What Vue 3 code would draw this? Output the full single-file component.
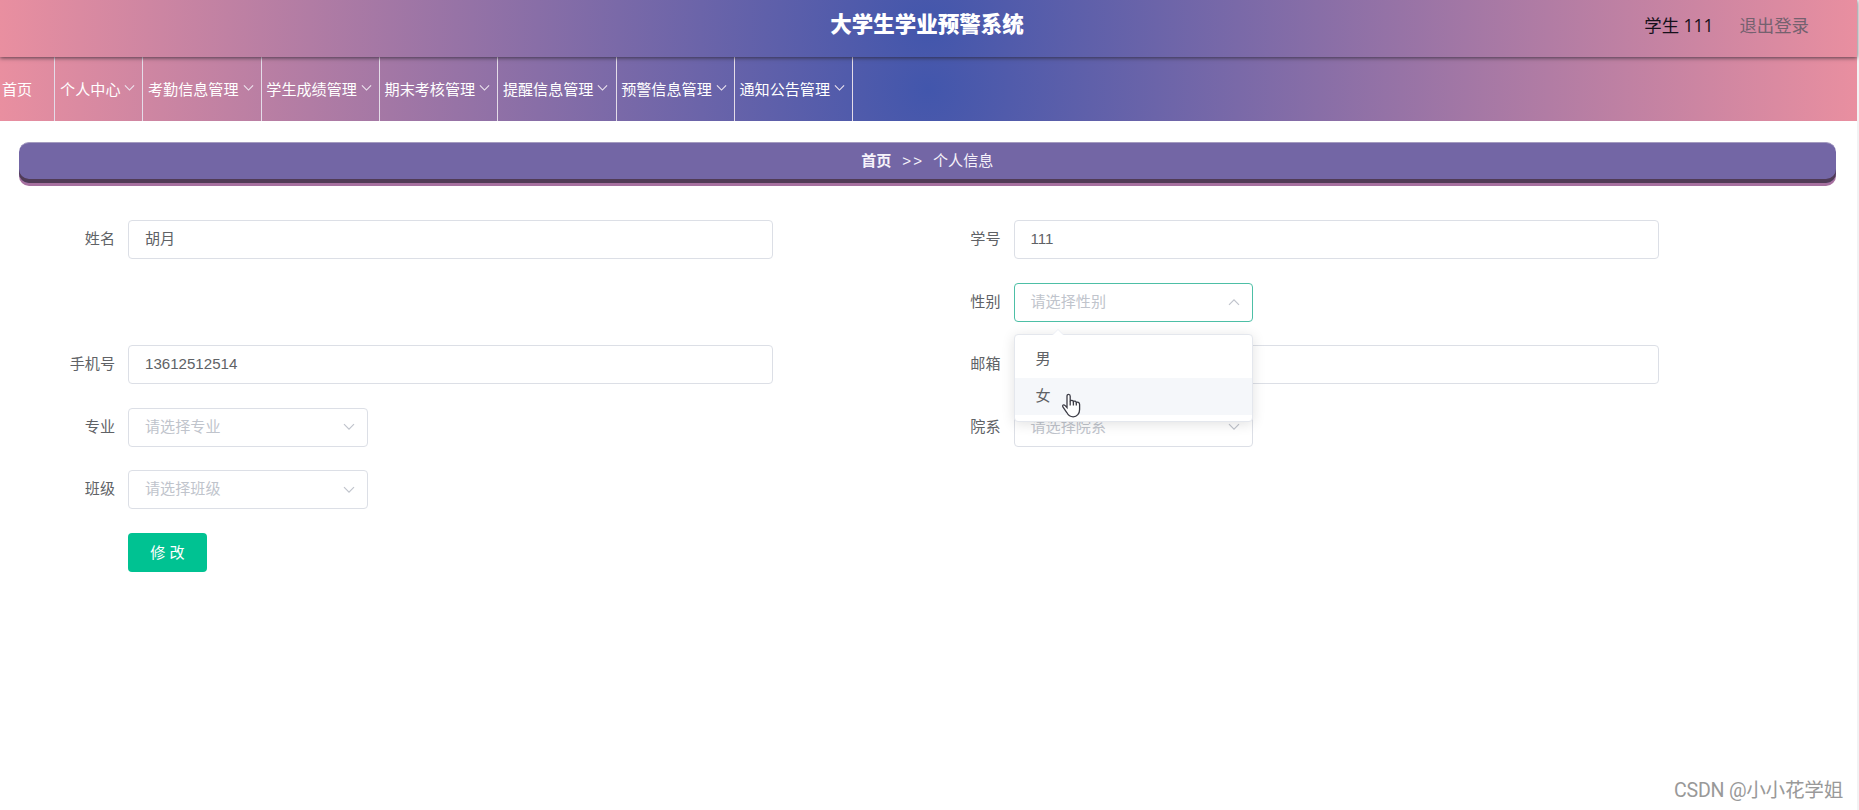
<template>
  <div class="page">
    <header class="header">
      <div class="title">大学生学业预警系统</div>
      <div class="user">
        <span class="user-name">学生 111</span>
        <a class="logout">退出登录</a>
      </div>
    </header>

    <nav class="nav">
      <a class="nav-item home">首页</a>
      <a
        v-for="(menu, i) in menus"
        :key="menu"
        class="nav-item"
        :class="{ first: i === 0 }"
      >
        <span>{{ menu }}</span>
        <svg class="arrow" viewBox="0 0 12 8">
          <path d="M1 1.2 L6 6.2 L11 1.2" />
        </svg>
      </a>
    </nav>

    <div class="breadcrumb">
      <b>首页</b>
      <span class="separator">&gt;&gt;</span>
      <span>个人信息</span>
    </div>

    <div class="form">
      <div
        v-for="field in fields"
        :key="field.label"
        class="form-item"
        :class="{ right: field.right }"
      >
        <label>{{ field.label }}</label>
        <div v-if="field.type === 'input'" class="input">{{ field.value }}</div>
        <div
          v-else
          class="input select"
          :class="{ open: openSelect === field.label }"
          @click="toggle(field.label)"
        >
          <span class="placeholder">请选择{{ field.label }}</span>
          <svg class="arrow" viewBox="0 0 12 8">
            <path d="M1 1.2 L6 6.2 L11 1.2" />
          </svg>
          <div v-if="field.options && openSelect === field.label" class="dropdown">
            <div
              v-for="option in field.options"
              :key="option"
              class="option"
              :class="{ hover: option === hovered }"
              @mouseenter="hovered = option"
            >
              {{ option }}
            </div>
            <svg class="pointer" viewBox="0 0 20 26">
              <path
                d="M6 14.5 V3.2 C6 .7 9.2 .7 9.2 3.2 V8.2 C9.8 7 12.2 7.2 12.4 8.6 C13.3 7.6 15.1 8 15.3 9.5 C16.4 8.8 18.6 9.4 18.6 11.5 V16.5 C18.6 20.5 16 23.8 12.2 23.8 C8.4 23.8 7 21.8 5.8 19.5 L1.9 14 C.9 12.1 2.6 11.1 4.2 12.6 Z"
              />
              <path d="M9.2 8 V12.5 M12.4 8.6 V12.5 M15.3 9.5 V12.5" />
            </svg>
          </div>
        </div>
      </div>
      <button class="submit">修 改</button>
    </div>

    <div class="watermark">CSDN @小小花学姐</div>
  </div>
</template>

<script setup>
import { ref } from "vue";

const menus = [
  "个人中心",
  "考勤信息管理",
  "学生成绩管理",
  "期末考核管理",
  "提醒信息管理",
  "预警信息管理",
  "通知公告管理",
];

const fields = [
  { label: "姓名", type: "input", value: "胡月" },
  { label: "学号", type: "input", value: "111", right: true },
  { label: "性别", type: "select", options: ["男", "女"], right: true },
  { label: "手机号", type: "input", value: "13612512514" },
  { label: "邮箱", type: "input", value: "", right: true },
  { label: "专业", type: "select" },
  { label: "院系", type: "select", right: true },
  { label: "班级", type: "select" },
];

const openSelect = ref("性别");
const hovered = ref("女");

function toggle(label) {
  openSelect.value = openSelect.value === label ? "" : label;
}
</script>

<style>
body {
  background: #fff;
  overflow: hidden;
}
</style>

<style scoped>
.page {
  position: relative;
  box-sizing: border-box;
  width: 1859px;
  height: 810px;
  border-right: 2px solid #f2f2f3;
  font-family: "Liberation Sans", "Noto Sans CJK SC", sans-serif;
  font-size: 15.1px;
  color: #606266;
}

.header,
.nav {
  background: radial-gradient(circle, #4256ac 0%, #e98fa0 100%);
}

.header {
  position: relative;
  z-index: 1;
  display: grid;
  grid-template-columns: 1fr auto 1fr;
  height: 57px;
  line-height: 50px;
  box-shadow: 0 1px 4px rgba(40, 35, 45, 0.75);
}

.title {
  grid-column: 2;
  margin-right: 3px;
  color: #fff;
  font-size: 21.5px;
  font-weight: 900;
}

.user {
  display: flex;
  justify-content: flex-end;
  gap: 26px;
  padding-right: 48px;
  font-family: "Open Sans", "Noto Sans CJK SC", sans-serif;
  font-size: 17.4px;
}

.user-name {
  color: #15101a;
}

.logout {
  color: #75616f;
}

.nav {
  display: flex;
  height: 64px;
}

.nav-item {
  display: flex;
  align-items: center;
  box-sizing: border-box;
  width: 118.3px;
  padding: 0 0 2px 4.6px;
  border-right: 1px solid #e4dce8;
  color: #fff;
  white-space: nowrap;
}

.nav-item.home {
  width: 54.6px;
  padding-left: 2px;
}

.nav-item.first {
  width: 88.8px;
  padding-left: 5.5px;
}

.arrow {
  width: 12px;
  height: 8px;
  fill: none;
  stroke: #c0c4cc;
  stroke-width: 1.2;
}

.nav .arrow {
  width: 11px;
  margin: 0 0 0 4px;
  stroke: #eee6f0;
}

.breadcrumb {
  display: flex;
  justify-content: center;
  box-sizing: border-box;
  height: 41px;
  margin: 21px 21px 0 18.5px;
  border-top: 1px solid #a49bc0;
  border-radius: 10px;
  background: #7366a5;
  box-shadow: inset 0 -4px 0 #503b56, 0 3px 0 #a6709f;
  color: #f6f2fa;
  line-height: 36px;
}

.separator {
  margin: 0 9px 0 11px;
  letter-spacing: 2px;
}

.form {
  display: grid;
  grid-template-columns: 885.5px 886px;
  grid-auto-rows: 39px;
  row-gap: 23.5px;
  margin-top: 37px;
}

.form-item {
  display: flex;
  grid-column: 1;
}

.form-item.right {
  grid-column: 2;
}

label {
  width: 115px;
  margin-right: 13px;
  line-height: 38px;
  text-align: right;
}

.right label {
  width: 115px;
}

.input {
  box-sizing: border-box;
  width: 645px;
  height: 39px;
  padding: 0 16px;
  border: 1px solid #dcdfe6;
  border-radius: 4px;
  background: #fff;
  line-height: 36px;
}

.select {
  position: relative;
  display: flex;
  align-items: center;
  justify-content: space-between;
  width: 239.5px;
  padding-right: 12px;
}

.select.open {
  border-color: #4dbfa6;
}

.placeholder {
  padding-bottom: 1px;
  color: #c0c4cc;
}

.select.open > .arrow {
  transform: rotate(180deg);
}

.dropdown {
  position: absolute;
  z-index: 2;
  top: 50.5px;
  left: -1px;
  box-sizing: border-box;
  width: 239px;
  height: 88px;
  padding-top: 6px;
  border: 1px solid #e4e7ed;
  border-radius: 4px;
  background: #fff;
  box-shadow: 0 2px 13px rgba(0, 0, 0, 0.12);
}

.dropdown::before {
  content: "";
  position: absolute;
  top: -5px;
  left: 37px;
  border: 6px solid transparent;
  border-top: 0;
  border-bottom-color: #fff;
  filter: drop-shadow(0 -1px 0 #ebeef5);
}

.option {
  height: 37px;
  padding-left: 21px;
  line-height: 36px;
}

.option.hover {
  background: #f5f7fa;
}

.pointer {
  position: absolute;
  top: 58px;
  left: 46px;
  width: 20px;
  height: 26px;
  fill: #fff;
  stroke: #3c3c46;
  stroke-width: 1.3;
}

.submit {
  grid-column: 1;
  width: 79px;
  height: 39px;
  margin-left: 128px;
  padding: 0 0 2px;
  border: 0;
  border-radius: 4px;
  background: #00c292;
  color: #fff;
  font: inherit;
}

.watermark {
  position: absolute;
  right: 14px;
  bottom: 5px;
  color: #999;
  font-family: Roboto, "Noto Sans CJK SC", sans-serif;
  font-size: 19.6px;
  letter-spacing: -0.25px;
  line-height: 28px;
}
</style>
